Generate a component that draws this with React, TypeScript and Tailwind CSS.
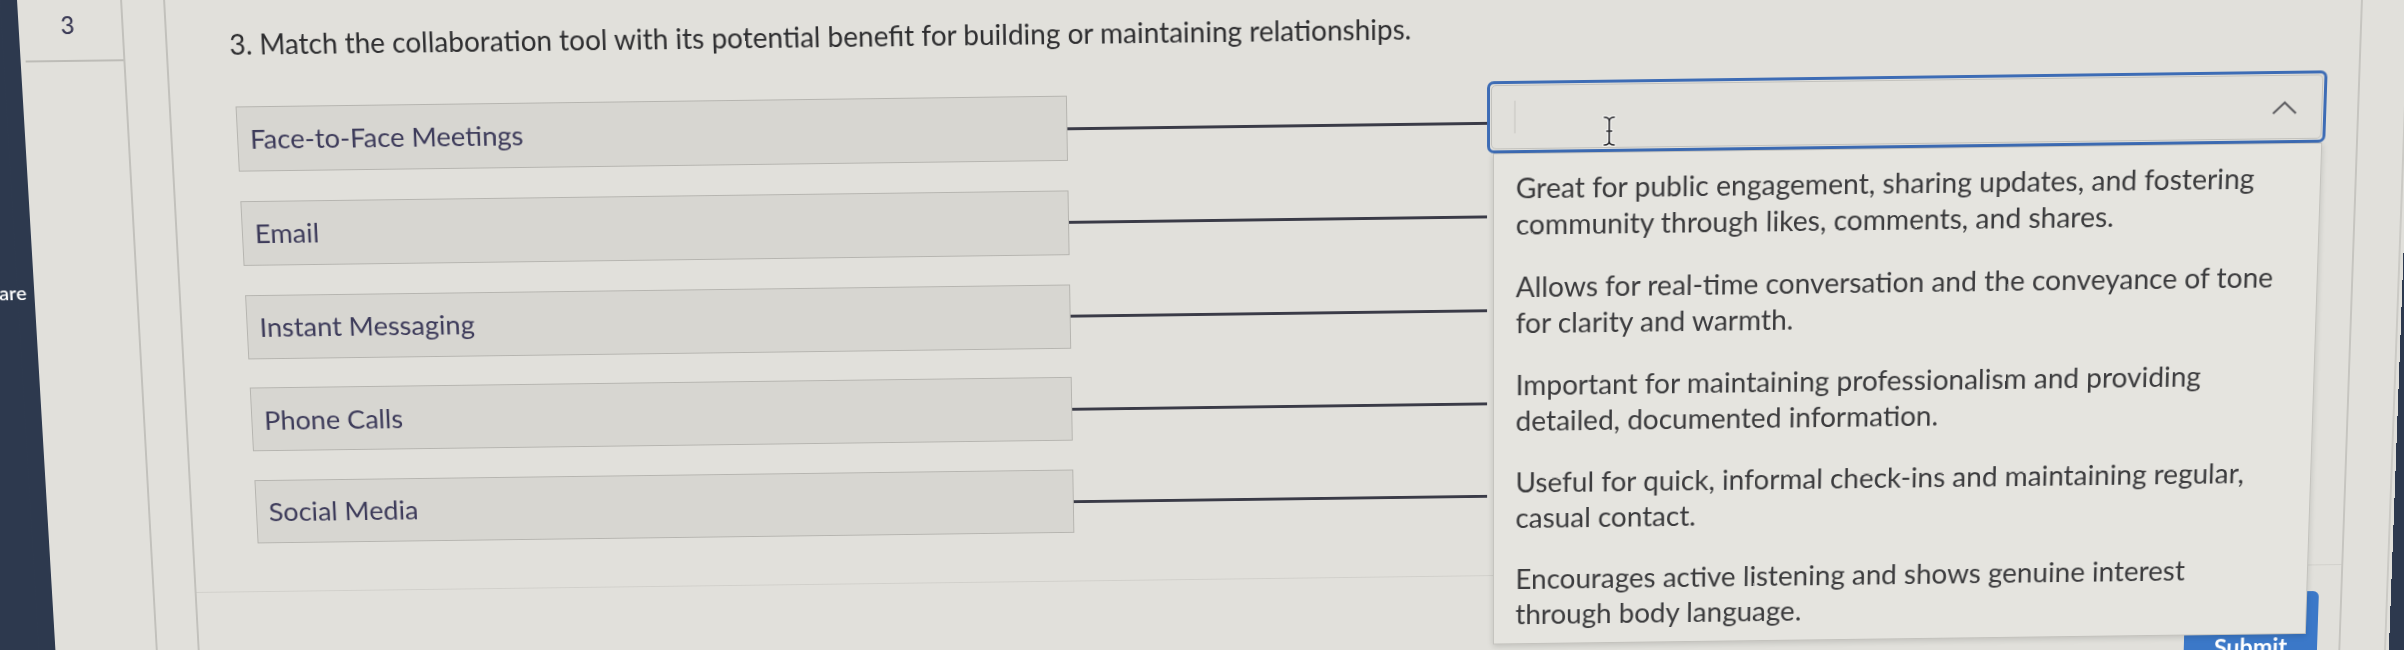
import React from "react";

const tools = ["Face-to-Face Meetings", "Email", "Instant Messaging", "Phone Calls", "Social Media"];

// each benefit is shown on two lines, broken where the dropdown breaks them
const benefits: string[][] = [
  ["Great for public engagement, sharing updates, and fostering", "community through likes, comments, and shares."],
  ["Allows for real-time conversation and the conveyance of tone", "for clarity and warmth."],
  ["Important for maintaining professionalism and providing", "detailed, documented information."],
  ["Useful for quick, informal check-ins and maintaining regular,", "casual contact."],
  ["Encourages active listening and shows genuine interest", "through body language."],
];

function IBeam({ className }: { className?: string }) {
  const d = "M2 2 Q7 2 7 6 Q7 2 12 2 M7 6 V26 M2 30 Q7 30 7 26 Q7 30 12 30 M4.5 16 H9.5";
  return (
    <svg className={className} width="14" height="32" viewBox="0 0 14 32" fill="none">
      <path d={d} stroke="#f4f4f2" strokeWidth="4" strokeLinecap="round" />
      <path d={d} stroke="#2a2a2e" strokeWidth="1.6" strokeLinecap="round" />
    </svg>
  );
}

function ChevronUp() {
  return (
    <svg width="26" height="14" viewBox="0 0 26 14" fill="none">
      <polyline points="1.5,13 13,2 24.5,13" stroke="#5a5a5e" strokeWidth="2" />
    </svg>
  );
}

function OpenSelect() {
  return (
    <div className="relative mb-[11px] h-[73px] w-[844px] shrink-0 rounded-[7px] border-[3px] border-[#3d6cb5] p-[1px]">
      <div className="flex h-full items-center justify-between rounded-[5px] border border-[#c3c2bd] pl-[22px] pr-[24px]">
        <span className="h-[33px] w-[2px] bg-[#d3d2cd]" />
        <ChevronUp />
      </div>
      <IBeam className="absolute left-[113px] top-[33px]" />

      {/* options menu, open over the rows below */}
      <div className="absolute left-[3px] top-[70px] z-10 flex w-[835px] flex-col gap-[27px] border border-[#c4c3be] bg-[#e5e4df] pb-[12px] pl-[22px] pt-[16px] shadow-[0_2px_6px_rgba(0,0,0,0.15)]">
        {benefits.map((lines) => (
          <div key={lines[0]} className="text-[28.5px] leading-[37px] text-[#3b3b3d]">
            {lines.map((l) => (
              <div key={l} className="whitespace-nowrap">
                {l}
              </div>
            ))}
          </div>
        ))}
      </div>
    </div>
  );
}

export default function App() {
  return (
    <div className="h-[650px] w-[2404px] overflow-hidden bg-[#2d394e] font-['Lato','Noto_Sans',sans-serif]">
      {/* the screen was photographed at an angle: a small perspective tilt on the whole page */}
      <div className="flex h-[730px] w-[2414px] origin-top-left bg-[#e1e0db] [transform:matrix3d(1,-0.013,0,0,0.0597,0.99922,0,0.00004,0,0,1,0,0,0,0,1)]">
        <div className="flex w-[17px] shrink-0 flex-col items-end bg-[#2d394e] pr-[8px] pt-[282px]">
          <span className="whitespace-nowrap text-[20px] font-semibold leading-[28px] text-white">are</span>
        </div>

        <div className="w-[105px] shrink-0 border-r-2 border-[#c2c1bc]">
          <div className="ml-[5px] h-[63px] border-b-2 border-[#bdbcb7] pr-[10px] pt-[12px] text-center text-[24px] font-medium leading-[28px] text-[#3a3a55]">
            3
          </div>
        </div>

        <div className="w-[43px] shrink-0 border-r-2 border-[#c2c1bc]" />

        <main className="flex w-[2199px] shrink-0 flex-col border-r-2 border-[#c6c5c0]">
          <p className="pl-[62px] pt-[30px] text-[28px] leading-[34px] text-[#2e2e30]">
            3. Match the collaboration tool with its potential benefit for building or maintaining relationships.
          </p>

          <div className="mt-[46px] flex flex-col gap-[29.75px] pl-[65px]">
            {tools.map((t, i) => (
              <div key={t} className="flex h-[66px] items-center">
                <div className="flex h-full w-[835px] shrink-0 items-center border border-[#b6b5b0] bg-[#d7d6d1] px-[12px] text-[27.5px] text-[#3d3b5a]">
                  {t}
                </div>
                <div className="h-[3px] w-[422px] shrink-0 bg-[#3a3b47]" />
                {i === 0 && <OpenSelect />}
              </div>
            ))}
          </div>

          <div className="mt-[50px] flex justify-end border-t border-[#d1d0cb] pr-[22px] pt-[27px]">
            <button className="h-[80px] w-[137px] self-start rounded-[6px] bg-[#3b78c8] pt-[35px] text-[24px] font-bold leading-[28px] text-white">
              Submit
            </button>
          </div>
        </main>

        <div className="w-[47px] shrink-0 border-r-2 border-[#cbcac5]" />
      </div>
    </div>
  );
}
